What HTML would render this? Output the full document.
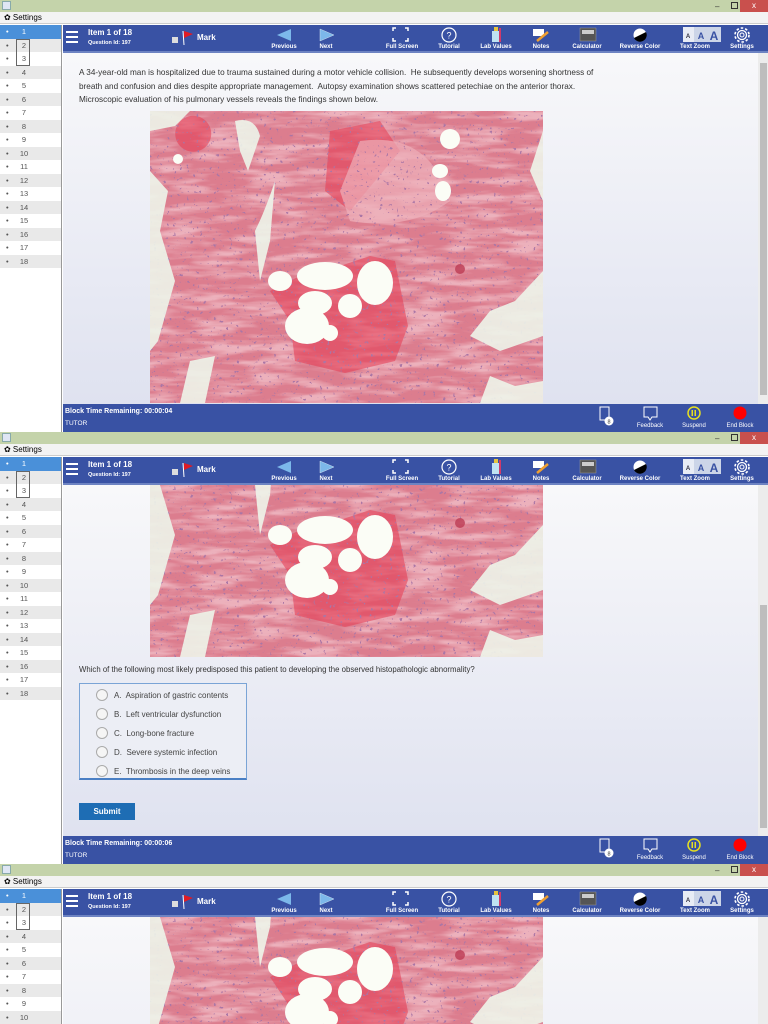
<!DOCTYPE html>
<html style="overflow:hidden"><head><meta charset="utf-8"><style>
*{margin:0;padding:0;box-sizing:border-box}
body{width:768px;height:1024px;overflow:hidden;background:#fff;font-family:"Liberation Sans",Arial,sans-serif;position:relative}
.p{position:absolute;left:0;width:768px;height:432px;overflow:hidden}
.tb{position:absolute;left:0;top:0;width:768px;height:12px;background:#c4d3aa}
.tb .ic{position:absolute;left:2px;top:1px;width:9px;height:9px;background:#dfe6f4;border:1px solid #8aa}
.tb .mn{position:absolute;left:715px;top:2px;font-size:8px;color:#333}
.tb .mx{position:absolute;left:731px;top:2px;width:7px;height:7px;border:1px solid #333}
.tb .cl{position:absolute;left:740px;top:0;width:28px;height:12px;background:#c9504d;color:#fff;font-size:8px;text-align:center;line-height:12px}
.sb{position:absolute;left:0;top:12px;width:768px;height:12px;background:#f3f3f3;border-bottom:1px solid #ccc;font-size:8px;line-height:12px;padding-left:4px;color:#000}
.side{position:absolute;left:0;top:25px;width:62px;height:407px;background:#fff;border-right:1px solid #999;overflow:hidden}
.r{height:13.5px;font-size:7.5px;line-height:13.5px;color:#555;position:relative}
.r:nth-child(even){background:#e9e9e9}
.r b{position:absolute;left:6px;font-weight:normal}
.r span{position:absolute;left:18px;width:12px;text-align:center}
.r.sel{background:#4a90d9;color:#fff}
.bx{position:absolute;left:16px;top:13.5px;width:14px;height:27px;border:1px solid #666}
.tool{position:absolute;left:63px;top:25px;width:705px;height:28px;background:#3952a4;color:#fff;border-bottom:2px solid #6d83c2}
.tool .t{position:absolute;font-size:6px;font-weight:bold;text-align:center;top:19px;transform:translateX(-50%);white-space:nowrap}
.tool svg{position:absolute}
.cont{position:absolute;left:63px;top:53px;width:705px;height:351px;background:linear-gradient(#f8f8fa,#dfe2f0);overflow:hidden}
.scr{position:absolute;right:0;top:0;width:10px;height:100%;background:#ececec}
.thumb{position:absolute;left:2px;width:7px;background:#bdbdbd}
.foot{position:absolute;left:63px;top:404px;width:705px;height:28px;background:#3952a4;color:#fff}
.foot .a{position:absolute;left:2px;top:4px;font-size:7px;font-weight:bold}
.foot .b{position:absolute;left:2px;top:16px;font-size:6.5px}
.foot .t{position:absolute;top:19px;font-size:6px;transform:translateX(-50%)}
.q{position:absolute;left:16px;font-size:8.2px;color:#333;line-height:13.5px}
.img{position:absolute;left:87px;width:393px;height:292px}
.ans{position:absolute;left:16px;top:198px;width:168px;height:97px;border:1px solid #7aa4d6;border-bottom:2px solid #4a7fc4;background:#eceef5}
.ans div{position:absolute;left:17px;font-size:8px;color:#444}
.ans i{position:absolute;left:-1px;top:-2px;width:12px;height:12px;border:1px solid #aaa;border-radius:50%;background:#f5f5f5}
.ans span{position:absolute;left:17px;white-space:nowrap}
.sub{position:absolute;left:16px;top:318px;width:56px;height:17px;background:#1e6db4;color:#fff;font-size:8px;font-weight:bold;text-align:center;line-height:17px}
</style></head><body>
<svg width="0" height="0" style="position:absolute"><defs>
<filter id="nuc" x="0" y="0" width="100%" height="100%">
<feTurbulence type="fractalNoise" baseFrequency="0.3" numOctaves="2" seed="3" result="n"/>
<feColorMatrix in="n" type="matrix" values="0 0 0 0 0.4  0 0 0 0 0.18  0 0 0 0 0.38  0 0 0 14 -9.6"/>
</filter>
<filter id="fib" x="0" y="0" width="100%" height="100%">
<feTurbulence type="fractalNoise" baseFrequency="0.02 0.12" numOctaves="3" seed="7" result="n"/>
<feColorMatrix in="n" type="matrix" values="0 0 0 0 0.96  0 0 0 0 0.72  0 0 0 0 0.76  0 0 0 -3 1.8"/>
</filter>
<symbol id="histo" viewBox="0 0 393 292">
<rect width="393" height="292" fill="#dc7d8e"/>
<rect width="393" height="292" filter="url(#fib)" opacity=".55"/>
<g fill="#e63a52" opacity=".55">
<path d="M180 20 L230 10 L250 40 L200 100 L175 80Z"/>
<path d="M120 180 L140 210 L145 250 L195 262 L245 250 L258 215 L245 150 L220 145 L190 155 L150 165Z"/>
<path d="M30 35 A18 18 0 1 1 31 36Z"/>
</g>
<g fill="#eeb0bb" opacity=".7">
<path d="M210 30 Q280 20 300 90 Q260 120 200 110 L190 80Z"/>
</g>
<rect width="393" height="292" filter="url(#nuc)"/>
<g fill="#eef5ea" opacity=".9">
<path d="M0 60 L18 80 L10 120 L25 170 L8 230 L0 240Z"/>
<path d="M85 10 Q105 5 110 25 L98 60 L90 40Z"/>
<path d="M105 120 Q115 100 125 70 L120 130 L110 170Z"/>
<path d="M393 160 L365 190 L340 200 L320 225 L350 240 L393 225Z"/>
<path d="M393 20 L380 60 L393 90Z"/>
<path d="M340 265 L365 275 L393 270 L393 292 L330 292Z"/>
<path d="M0 0 L40 0 L25 15 L0 20Z"/>
<path d="M40 250 L65 245 L55 292 L30 292Z"/>
</g>
<g fill="#fbfdf6">
<ellipse cx="175" cy="165" rx="28" ry="14"/>
<ellipse cx="225" cy="172" rx="18" ry="22"/>
<ellipse cx="130" cy="170" rx="12" ry="10"/>
<ellipse cx="165" cy="192" rx="17" ry="12"/>
<ellipse cx="200" cy="195" rx="12" ry="12"/>
<ellipse cx="157" cy="215" rx="22" ry="18"/>
<ellipse cx="180" cy="222" rx="8" ry="8"/>
<ellipse cx="300" cy="28" rx="10" ry="10"/>
<ellipse cx="290" cy="60" rx="8" ry="7"/>
<ellipse cx="293" cy="80" rx="8" ry="10"/>
<ellipse cx="28" cy="48" rx="5" ry="5"/>
</g>
<circle cx="310" cy="158" r="5" fill="#b8304a" opacity=".7"/>
</symbol>
<symbol id="toolbar" viewBox="0 0 705 28">
<g fill="#fff"><rect x="3" y="6" width="12" height="2"/><rect x="3" y="11" width="12" height="2"/><rect x="3" y="16" width="12" height="2"/></g>
<rect x="109" y="12" width="6" height="6" fill="#ddd"/>
<path d="M120 6 L121 20" stroke="#fff" stroke-width="1"/><path d="M121 6 L130 9 L121 13Z" fill="#e01b24"/>
<path d="M214 10 L228 4 L228 16Z" fill="#7cb8ea"/>
<path d="M257 4 L271 10 L257 16Z" fill="#7cb8ea" stroke="#cde" stroke-width=".5"/>
<path d="M333 3h-3v3M342 3h3v3M333 16h-3v-3M342 16h3v-3" stroke="#fff" fill="none" stroke-width="1.5"/>
<circle cx="386" cy="10" r="7" fill="none" stroke="#fff" stroke-width="1.2"/><text x="386" y="13.5" font-size="9" fill="#fff" text-anchor="middle" font-family="Liberation Sans">?</text>
<rect x="429" y="6" width="7" height="11" fill="#bfe2f2"/><rect x="431" y="2" width="4" height="4" fill="#e6c440"/><rect x="436" y="3" width="2" height="14" fill="#d13a6a"/>
<rect x="470" y="4" width="11" height="7" fill="#fff"/><path d="M474 16 L485 7" stroke="#f0a030" stroke-width="2.5"/>
<rect x="517" y="3" width="16" height="13" fill="#555" stroke="#999" stroke-width=".5"/><rect x="519" y="5" width="12" height="4" fill="#ccc"/>
<circle cx="577" cy="10" r="6.5" fill="#fff"/><path d="M571 13 A6.5 6.5 0 0 0 583 7Z" fill="#000"/>
<rect x="620" y="2" width="38" height="15" fill="#dde3f0" opacity=".9"/><rect x="620" y="2" width="11" height="15" fill="#e8ecf5"/>
<text x="625" y="13" font-size="6" fill="#334" text-anchor="middle" font-family="Liberation Sans" font-weight="bold">A</text>
<text x="638" y="14" font-size="9" fill="#3952a4" text-anchor="middle" font-family="Liberation Sans" font-weight="bold">A</text>
<text x="651" y="15" font-size="12" fill="#3952a4" text-anchor="middle" font-family="Liberation Sans" font-weight="bold">A</text>
<circle cx="679" cy="10" r="4.5" fill="none" stroke="#fff" stroke-width="1.3"/><circle cx="679" cy="10" r="2" fill="none" stroke="#fff" stroke-width="1"/>
<circle cx="679" cy="10" r="7" fill="none" stroke="#fff" stroke-width="1.6" stroke-dasharray="2.5 2"/>
</symbol>
<symbol id="footer" viewBox="0 0 705 28">
<rect x="537" y="3" width="9" height="13" fill="none" stroke="#fff" stroke-width="1"/><circle cx="546" cy="17" r="4.5" fill="#fff"/><text x="546" y="19.5" font-size="5.5" fill="#333" text-anchor="middle" font-family="Liberation Sans">8</text>
<path d="M581 3h13v10h-5l-2 3l-2-3h-4Z" fill="none" stroke="#fff" stroke-width="1"/>
<circle cx="631" cy="9" r="6" fill="none" stroke="#e6e020" stroke-width="1.5"/><rect x="628.5" y="6" width="1.5" height="6" fill="#e6e020"/><rect x="631.5" y="6" width="1.5" height="6" fill="#e6e020"/>
<circle cx="677" cy="9" r="6.5" fill="#f00"/>
</symbol>
</defs></svg>

<!-- PANEL 1 -->
<div class="p" style="top:0">
<div class="tb"><div class="ic"></div><div class="mn">–</div><div class="mx"></div><div class="cl">x</div></div>
<div class="sb">✿ Settings</div>
<div class="side">
<div class="r sel"><b>•</b><span>1</span></div><div class="r"><b>•</b><span>2</span></div><div class="r"><b>•</b><span>3</span></div><div class="r"><b>•</b><span>4</span></div><div class="r"><b>•</b><span>5</span></div><div class="r"><b>•</b><span>6</span></div><div class="r"><b>•</b><span>7</span></div><div class="r"><b>•</b><span>8</span></div><div class="r"><b>•</b><span>9</span></div><div class="r"><b>•</b><span>10</span></div><div class="r"><b>•</b><span>11</span></div><div class="r"><b>•</b><span>12</span></div><div class="r"><b>•</b><span>13</span></div><div class="r"><b>•</b><span>14</span></div><div class="r"><b>•</b><span>15</span></div><div class="r"><b>•</b><span>16</span></div><div class="r"><b>•</b><span>17</span></div><div class="r"><b>•</b><span>18</span></div>
<div class="bx"></div></div>
<div class="tool"><svg width="705" height="28" style="left:0;top:0"><use href="#toolbar"/></svg>
<div style="position:absolute;left:25px;top:3px;font-size:8px;font-weight:bold">Item 1 of 18</div>
<div style="position:absolute;left:25px;top:15px;font-size:5.5px;font-weight:bold">Question Id: 197</div>
<div style="position:absolute;left:134px;top:8px;font-size:8px;font-weight:bold">Mark</div>
<div class="t" style="left:221px">Previous</div><div class="t" style="left:263px">Next</div><div class="t" style="left:339px">Full Screen</div><div class="t" style="left:386px">Tutorial</div><div class="t" style="left:433px">Lab Values</div><div class="t" style="left:478px">Notes</div><div class="t" style="left:524px">Calculator</div><div class="t" style="left:577px">Reverse Color</div><div class="t" style="left:632px">Text Zoom</div><div class="t" style="left:679px">Settings</div>
</div>
<div class="cont">
<div class="q" style="top:13px">A 34-year-old man is hospitalized due to trauma sustained during a motor vehicle collision.&nbsp; He subsequently develops worsening shortness of<br>breath and confusion and dies despite appropriate management.&nbsp; Autopsy examination shows scattered petechiae on the anterior thorax.<br>Microscopic evaluation of his pulmonary vessels reveals the findings shown below.</div>
<svg class="img" style="top:58px" viewBox="0 0 393 292"><use href="#histo"/></svg>
<div class="scr"><div class="thumb" style="top:10px;height:332px"></div></div>
</div>
<div class="foot"><div class="a">Block Time Remaining: 00:00:04</div><div class="b">TUTOR</div>
<svg width="705" height="28" style="position:absolute;left:0;top:0"><use href="#footer"/></svg>
<div class="t" style="left:587px">Feedback</div><div class="t" style="left:631px">Suspend</div><div class="t" style="left:677px">End Block</div></div>
</div>

<!-- PANEL 2 -->
<div class="p" style="top:432px">
<div class="tb"><div class="ic"></div><div class="mn">–</div><div class="mx"></div><div class="cl">x</div></div>
<div class="sb">✿ Settings</div>
<div class="side">
<div class="r sel"><b>•</b><span>1</span></div><div class="r"><b>•</b><span>2</span></div><div class="r"><b>•</b><span>3</span></div><div class="r"><b>•</b><span>4</span></div><div class="r"><b>•</b><span>5</span></div><div class="r"><b>•</b><span>6</span></div><div class="r"><b>•</b><span>7</span></div><div class="r"><b>•</b><span>8</span></div><div class="r"><b>•</b><span>9</span></div><div class="r"><b>•</b><span>10</span></div><div class="r"><b>•</b><span>11</span></div><div class="r"><b>•</b><span>12</span></div><div class="r"><b>•</b><span>13</span></div><div class="r"><b>•</b><span>14</span></div><div class="r"><b>•</b><span>15</span></div><div class="r"><b>•</b><span>16</span></div><div class="r"><b>•</b><span>17</span></div><div class="r"><b>•</b><span>18</span></div>
<div class="bx"></div></div>
<div class="tool"><svg width="705" height="28" style="left:0;top:0"><use href="#toolbar"/></svg>
<div style="position:absolute;left:25px;top:3px;font-size:8px;font-weight:bold">Item 1 of 18</div>
<div style="position:absolute;left:25px;top:15px;font-size:5.5px;font-weight:bold">Question Id: 197</div>
<div style="position:absolute;left:134px;top:8px;font-size:8px;font-weight:bold">Mark</div>
<div class="t" style="left:221px">Previous</div><div class="t" style="left:263px">Next</div><div class="t" style="left:339px">Full Screen</div><div class="t" style="left:386px">Tutorial</div><div class="t" style="left:433px">Lab Values</div><div class="t" style="left:478px">Notes</div><div class="t" style="left:524px">Calculator</div><div class="t" style="left:577px">Reverse Color</div><div class="t" style="left:632px">Text Zoom</div><div class="t" style="left:679px">Settings</div>
</div>
<div class="cont">
<svg class="img" style="top:-120px" viewBox="0 0 393 292"><use href="#histo"/></svg>
<div class="q" style="top:178px;font-size:7.8px">Which of the following most likely predisposed this patient to developing the observed histopathologic abnormality?</div>
<div class="ans">
<div style="top:7px"><i></i><span>A.&nbsp; Aspiration of gastric contents</span></div>
<div style="top:26px"><i></i><span>B.&nbsp; Left ventricular dysfunction</span></div>
<div style="top:45px"><i></i><span>C.&nbsp; Long-bone fracture</span></div>
<div style="top:64px"><i></i><span>D.&nbsp; Severe systemic infection</span></div>
<div style="top:83px"><i></i><span>E.&nbsp; Thrombosis in the deep veins</span></div>
</div>
<div class="sub">Submit</div>
<div class="scr"><div class="thumb" style="top:120px;height:223px"></div></div>
</div>
<div class="foot"><div class="a">Block Time Remaining: 00:00:06</div><div class="b">TUTOR</div>
<svg width="705" height="28" style="position:absolute;left:0;top:0"><use href="#footer"/></svg>
<div class="t" style="left:587px">Feedback</div><div class="t" style="left:631px">Suspend</div><div class="t" style="left:677px">End Block</div></div>
</div>

<!-- PANEL 3 -->
<div class="p" style="top:864px;height:160px">
<div class="tb"><div class="ic"></div><div class="mn">–</div><div class="mx"></div><div class="cl">x</div></div>
<div class="sb">✿ Settings</div>
<div class="side">
<div class="r sel"><b>•</b><span>1</span></div><div class="r"><b>•</b><span>2</span></div><div class="r"><b>•</b><span>3</span></div><div class="r"><b>•</b><span>4</span></div><div class="r"><b>•</b><span>5</span></div><div class="r"><b>•</b><span>6</span></div><div class="r"><b>•</b><span>7</span></div><div class="r"><b>•</b><span>8</span></div><div class="r"><b>•</b><span>9</span></div><div class="r"><b>•</b><span>10</span></div>
<div class="bx"></div></div>
<div class="tool"><svg width="705" height="28" style="left:0;top:0"><use href="#toolbar"/></svg>
<div style="position:absolute;left:25px;top:3px;font-size:8px;font-weight:bold">Item 1 of 18</div>
<div style="position:absolute;left:25px;top:15px;font-size:5.5px;font-weight:bold">Question Id: 197</div>
<div style="position:absolute;left:134px;top:8px;font-size:8px;font-weight:bold">Mark</div>
<div class="t" style="left:221px">Previous</div><div class="t" style="left:263px">Next</div><div class="t" style="left:339px">Full Screen</div><div class="t" style="left:386px">Tutorial</div><div class="t" style="left:433px">Lab Values</div><div class="t" style="left:478px">Notes</div><div class="t" style="left:524px">Calculator</div><div class="t" style="left:577px">Reverse Color</div><div class="t" style="left:632px">Text Zoom</div><div class="t" style="left:679px">Settings</div>
</div>
<div class="cont">
<svg class="img" style="top:-120px" viewBox="0 0 393 292"><use href="#histo"/></svg>
<div class="scr"></div>
</div>
</div>
</body></html>
